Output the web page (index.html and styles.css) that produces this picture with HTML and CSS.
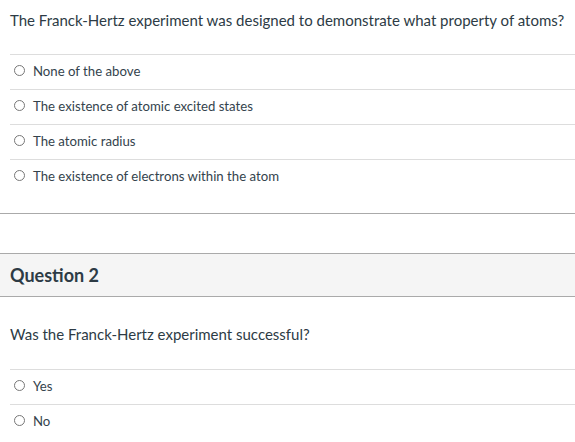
FILE: index.html
```html
<!DOCTYPE html>
<html>
<head>
<meta charset="utf-8">
<link rel="stylesheet" href="styles.css">
</head>
<body>
<div class="quiz">
  <div class="question">
    <div class="q-text">The Franck-Hertz experiment was designed to demonstrate what property of atoms?</div>
    <div class="answers">
      <div class="answer"><span class="radio"></span><span class="label">None of the above</span></div>
      <div class="answer"><span class="radio"></span><span class="label">The existence of atomic excited states</span></div>
      <div class="answer"><span class="radio"></span><span class="label">The atomic radius</span></div>
      <div class="answer"><span class="radio"></span><span class="label">The existence of electrons within the atom</span></div>
    </div>
  </div>
  <div class="question second">
    <div class="q-header">Question 2</div>
    <div class="q-text q2">Was the Franck-Hertz experiment successful?</div>
    <div class="answers">
      <div class="answer"><span class="radio"></span><span class="label">Yes</span></div>
      <div class="answer"><span class="radio"></span><span class="label">No</span></div>
    </div>
  </div>
</div>
</body>
</html>
```
FILE: styles.css
```css
html, body {
  margin: 0;
  padding: 0;
  background: #fff;
}
body {
  font-family: Lato, "Noto Sans", sans-serif;
  color: #2d3b45;
  overflow: hidden;
}
.question {
  border-bottom: 1px solid #aaaaaa;
  padding-bottom: 19px;
}
.question.second {
  border-bottom: none;
  margin-top: 39px;
  border-top: 1px solid #aaaaaa;
}
.q-text {
  font-size: 15px;
  line-height: 20px;
  padding: 10px 10px 24px 10px;
}
.q-text.q2 {
  padding-top: 27px;
  padding-bottom: 25px;
}
.q-header {
  background: #f5f5f5;
  border-bottom: 1px solid #aaaaaa;
  height: 43px;
  box-sizing: border-box;
  padding: 0 10px;
  display: flex;
  align-items: center;
  font-size: 18px;
  font-weight: 700;
  color: #2d3b45;
}
.answers {
  margin-left: 10px;
}
.answer {
  border-top: 1px solid #dddddd;
  height: 35px;
  box-sizing: border-box;
  display: flex;
  align-items: center;
  padding-left: 4px;
  padding-bottom: 3px;
}
.radio {
  width: 9px;
  height: 9px;
  border: 1px solid #777;
  border-radius: 50%;
  margin-right: 8px;
  flex: none;
}
.label {
  font-size: 13.2px;
  color: #34434d;
}
```
